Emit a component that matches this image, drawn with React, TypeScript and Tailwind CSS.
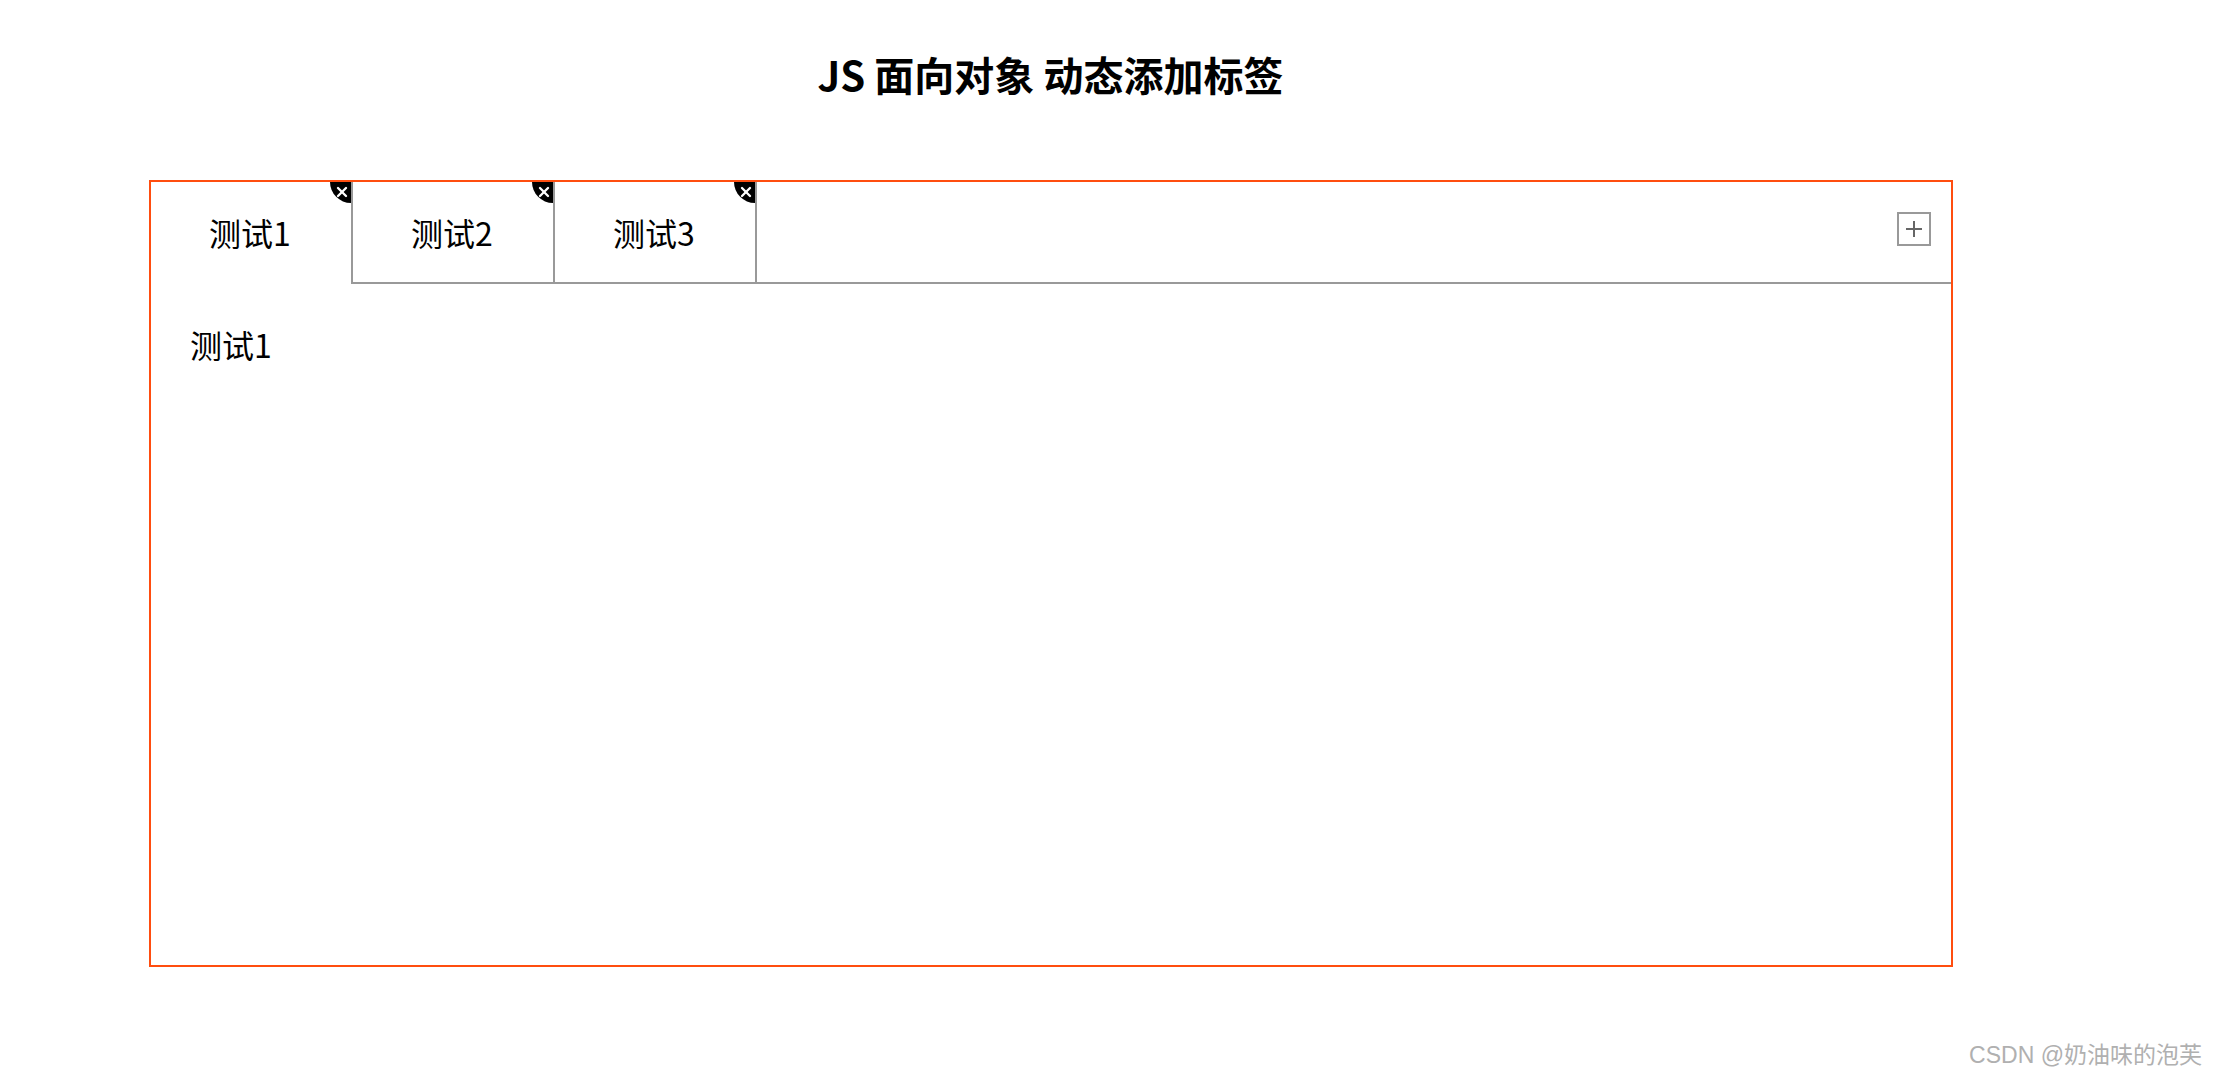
import { X } from 'lucide-react'

const tabs = ['测试1', '测试2', '测试3']

function Tab({ label, active }: { label: string; active: boolean }) {
  return (
    <li
      className={`relative flex h-[102px] w-[202px] items-center justify-center border-r-2 border-[#999] pb-[3px] pr-[2px] ${
        active ? 'z-10 bg-white' : ''
      }`}
    >
      {label}
      <span className="absolute right-0 top-0 flex h-[21px] w-[21px] items-center justify-center rounded-bl-full bg-black pb-[2px] pl-[2px] text-white">
        <X size={16} strokeWidth={3.5} />
      </span>
    </li>
  )
}

export default function App() {
  return (
    <div className="relative h-[1076px] w-[2216px] overflow-hidden bg-white text-black [font-family:'Noto_Sans_CJK_SC',sans-serif]">
      <h1 className="flex h-[180px] w-[2101px] justify-center pt-[46px] text-[40px] font-bold leading-[56px]">
        JS 面向对象 动态添加标签
      </h1>

      <div className="ml-[149px] h-[787px] w-[1804px] border-2 border-[#ff4d0f] text-[32px]">
        <div className="flex h-[102px] items-start justify-between border-b-2 border-[#999]">
          <ul className="flex">
            {tabs.map((t, i) => (
              <Tab key={t} label={t} active={i === 0} />
            ))}
          </ul>
          <button className="mr-[20px] mt-[30px] flex h-[34px] w-[34px] items-center justify-center border-2 border-[#999] text-[#666]">
            <svg width="18" height="18" viewBox="0 0 18 18" stroke="currentColor" strokeWidth="2">
              <path d="M1 9h16M9 1v16" />
            </svg>
          </button>
        </div>
        <div className="px-[39px] pt-[38px] leading-[44px]">测试1</div>
      </div>

      <div className="absolute bottom-[6px] right-[14px] text-[23px] leading-[30px] text-[#b0b0b0] [font-family:'Liberation_Sans','Noto_Sans_CJK_SC',sans-serif]">
        CSDN @奶油味的泡芙
      </div>
    </div>
  )
}
